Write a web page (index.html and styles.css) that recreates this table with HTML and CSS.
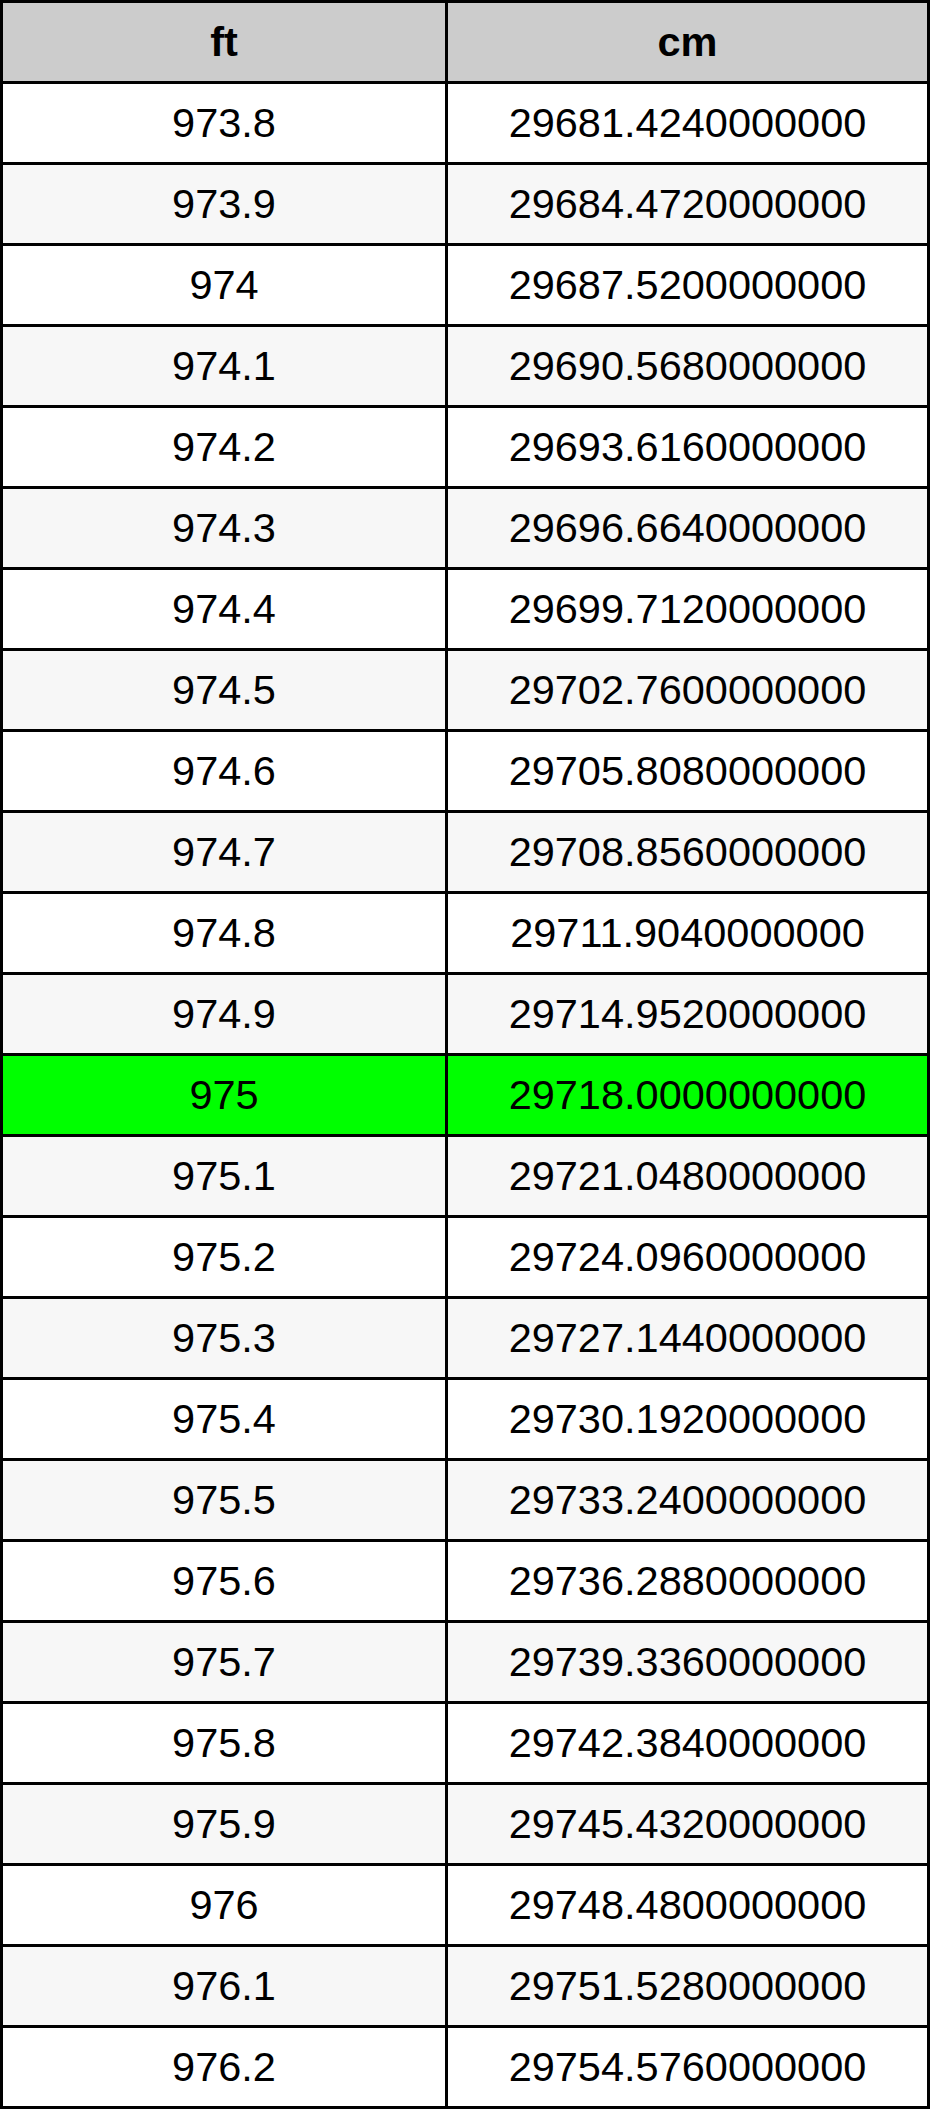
FILE: index.html
```html
<!DOCTYPE html>
<html>
<head>
<meta charset="utf-8">
<link rel="stylesheet" href="styles.css">
</head>
<body>
<table class="conv">
<thead>
<tr><th class="c1">ft</th><th class="c2">cm</th></tr>
</thead>
<tbody>
<tr><td>973.8</td><td>29681.4240000000</td></tr>
<tr class="alt"><td>973.9</td><td>29684.4720000000</td></tr>
<tr><td>974</td><td>29687.5200000000</td></tr>
<tr class="alt"><td>974.1</td><td>29690.5680000000</td></tr>
<tr><td>974.2</td><td>29693.6160000000</td></tr>
<tr class="alt"><td>974.3</td><td>29696.6640000000</td></tr>
<tr><td>974.4</td><td>29699.7120000000</td></tr>
<tr class="alt"><td>974.5</td><td>29702.7600000000</td></tr>
<tr><td>974.6</td><td>29705.8080000000</td></tr>
<tr class="alt"><td>974.7</td><td>29708.8560000000</td></tr>
<tr><td>974.8</td><td>29711.9040000000</td></tr>
<tr class="alt"><td>974.9</td><td>29714.9520000000</td></tr>
<tr class="hl"><td>975</td><td>29718.0000000000</td></tr>
<tr class="alt"><td>975.1</td><td>29721.0480000000</td></tr>
<tr><td>975.2</td><td>29724.0960000000</td></tr>
<tr class="alt"><td>975.3</td><td>29727.1440000000</td></tr>
<tr><td>975.4</td><td>29730.1920000000</td></tr>
<tr class="alt"><td>975.5</td><td>29733.2400000000</td></tr>
<tr><td>975.6</td><td>29736.2880000000</td></tr>
<tr class="alt"><td>975.7</td><td>29739.3360000000</td></tr>
<tr><td>975.8</td><td>29742.3840000000</td></tr>
<tr class="alt"><td>975.9</td><td>29745.4320000000</td></tr>
<tr><td>976</td><td>29748.4800000000</td></tr>
<tr class="alt"><td>976.1</td><td>29751.5280000000</td></tr>
<tr><td>976.2</td><td>29754.5760000000</td></tr>
</tbody>
</table>
</body>
</html>
```
FILE: styles.css
```css
html, body {
  margin: 0;
  padding: 0;
  background: #ffffff;
}
.conv {
  width: 930px;
  border-collapse: separate;
  border-spacing: 0;
  border-top: 3px solid #000;
  border-left: 3px solid #000;
  table-layout: fixed;
  font-family: "Liberation Sans", Arial, sans-serif;
  font-size: 41.5px;
  color: #000;
}
.conv th, .conv td {
  border-right: 3px solid #000;
  border-bottom: 3px solid #000;
  height: 78px;
  padding: 0;
  text-align: center;
  vertical-align: middle;
  box-sizing: content-box;
  line-height: 46px;
}
.conv th {
  background: #cccccc;
  font-weight: bold;
}
.conv .c1 {
  width: 442px;
}
.conv tr.alt td {
  background: #f7f7f7;
}
.conv tr.hl td {
  background: #00ff00;
}
```
